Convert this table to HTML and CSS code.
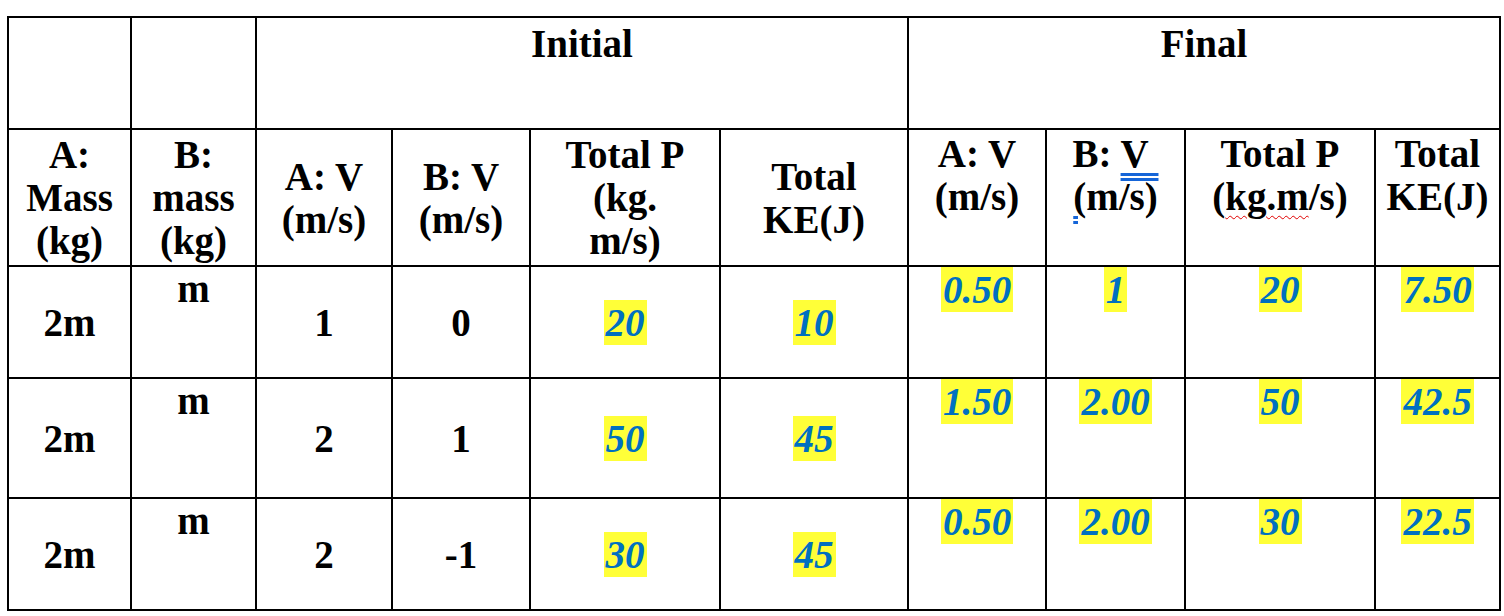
FILE: index.html
```html
<!DOCTYPE html>
<html lang="en">
<head>
    <meta charset="UTF-8">
    <meta name="viewport" content="width=device-width, initial-scale=1.0">
    <title>Collisions</title>
    <link rel="stylesheet" href="styles.css">
</head>
<body>
    <table class="results">
        <colgroup>
            <col style="width: 123px">
            <col style="width: 125px">
            <col style="width: 136px">
            <col style="width: 138px">
            <col style="width: 190px">
            <col style="width: 188px">
            <col style="width: 138px">
            <col style="width: 139px">
            <col style="width: 190px">
            <col style="width: 125px">
        </colgroup>
        <tr class="group-row">
            <th></th>
            <th></th>
            <th colspan="4">Initial</th>
            <th colspan="4">Final</th>
        </tr>
        <tr class="head-row">
            <th>A:<br>Mass<br>(kg)</th>
            <th>B:<br>mass<br>(kg)</th>
            <th>A: V<br>(m/s)</th>
            <th>B: V<br>(m/s)</th>
            <th>Total P<br>(kg.<br>m/s)</th>
            <th>Total<br>KE(J)</th>
            <th class="top">A: V<br>(m/s)</th>
            <th class="top">B: <span class="grammar">V&nbsp;</span><br><span class="grammar-short">(</span>m/s)</th>
            <th class="top">Total P<br>(<span class="spelling">kg.m</span>/s)</th>
            <th class="top">Total<br>KE(J)</th>
        </tr>
        <tr class="data-row">
            <td>2m</td>
            <td class="top">m</td>
            <td>1</td>
            <td>0</td>
            <td><span class="answer">20</span></td>
            <td><span class="answer">10</span></td>
            <td class="top"><span class="answer">0.50</span></td>
            <td class="top"><span class="answer">1</span></td>
            <td class="top"><span class="answer">20</span></td>
            <td class="top"><span class="answer">7.50</span></td>
        </tr>
        <tr class="data-row tall">
            <td>2m</td>
            <td class="top">m</td>
            <td>2</td>
            <td>1</td>
            <td><span class="answer">50</span></td>
            <td><span class="answer">45</span></td>
            <td class="top"><span class="answer">1.50</span></td>
            <td class="top"><span class="answer">2.00</span></td>
            <td class="top"><span class="answer">50</span></td>
            <td class="top"><span class="answer">42.5</span></td>
        </tr>
        <tr class="data-row">
            <td>2m</td>
            <td class="top">m</td>
            <td>2</td>
            <td>-1</td>
            <td><span class="answer">30</span></td>
            <td><span class="answer">45</span></td>
            <td class="top"><span class="answer">0.50</span></td>
            <td class="top"><span class="answer">2.00</span></td>
            <td class="top"><span class="answer">30</span></td>
            <td class="top"><span class="answer">22.5</span></td>
        </tr>
    </table>
</body>
</html>
```

FILE: styles.css
```css
body {
    margin: 0;
    background: #fff;
    color: #000;
    font-family: "Liberation Serif", "DejaVu Serif", serif;
}
.results {
    margin: 16px 0 0 7px;
    width: 1492px;
    table-layout: fixed;
    border-collapse: collapse;
    border: 2px solid #000;
    font-size: 39px;
    line-height: 43px;
    font-weight: bold;
}
.results th, .results td {
    border: 2px solid #000;
    padding: 0 4px;
    text-align: center;
    vertical-align: middle;
    font-weight: bold;
}
.group-row {
    height: 112px;
}
.group-row th {
    vertical-align: top;
    padding-top: 4px;
}
.head-row {
    height: 137px;
}
.data-row {
    height: 112px;
}
.data-row.tall {
    height: 120px;
}
.results .top {
    vertical-align: top;
    padding-top: 2px;
}
.data-row .top {
    padding-top: 0;
}
.answer {
    display: inline-block;
    line-height: 45px;
    padding: 0 2px;
    background: #ffff38;
    color: #0070c0;
    font-style: italic;
}
.grammar {
    text-decoration: underline double #1565d8;
    text-underline-offset: 6px;
}
.grammar-short {
    text-decoration: underline double #1565d8;
    text-underline-offset: 6px;
}
.spelling {
    text-decoration: underline wavy #e00000;
    text-decoration-thickness: 1px;
    text-underline-offset: 5px;
}
```
